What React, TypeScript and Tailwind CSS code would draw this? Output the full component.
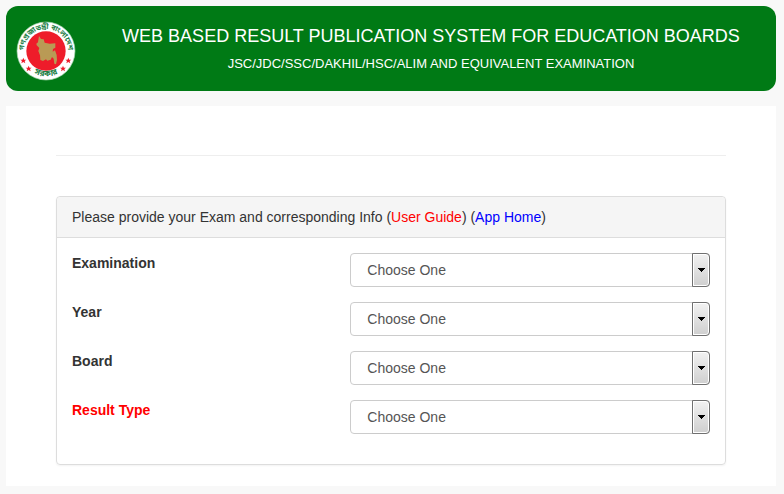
import React from 'react';

interface Field {
  id: string;
  label: string;
  highlight?: boolean;
  options: string[];
}

const fields: Field[] = [
  { id: 'exam', label: 'Examination', options: ['SSC/Dakhil', 'JSC/JDC', 'HSC/Alim'] },
  { id: 'year', label: 'Year', options: ['2016', '2015', '2014'] },
  { id: 'board', label: 'Board', options: ['Dhaka', 'Chittagong', 'Rajshahi'] },
  { id: 'result_type', label: 'Result Type', highlight: true, options: ['Individual Result', 'Institution Result'] },
];

const stars = [
  { x: 70, y: 182 },
  { x: 86, y: 206 },
  { x: 189, y: 206 },
  { x: 205, y: 182 },
];

const Emblem: React.FC = () => (
  <svg viewBox="48 63 180 180" className="size-[60px] shrink-0" role="img" aria-label="Government seal">
    <circle cx="138" cy="153" r="87" fill="#fff" stroke="#a5d3ae" strokeWidth="2" />
    <circle cx="138" cy="153" r="59" fill="#ee1c2a" />
    <path
      d="M117 108l6 9 8 1 3 10 15 3 17-1v13l-7 4-1 8 7-4 5 14 1 15-3 13-5-2-2-15-5-5-4 8-10 3-4-4-9 5-8-3-1-14-5-13 3-9-8-8-1-5 5-4 1-7z"
      fill="#b99a55"
    />
    {stars.map((star) => (
      <path
        key={star.x}
        transform={`translate(${star.x} ${star.y})`}
        d="M0-9l2.500 6h6.500l-5 4 2 7-6-4-6 4 2-7-5-4h6.500z"
        fill="#ee1c2a"
      />
    ))}
    <path id="arc-top" d="M72 153a66 66 0 0 1 132 0" fill="none" />
    <path id="arc-bottom" d="M80 203a78 78 0 0 0 116 0" fill="none" />
    <g fill="#1d8048" textAnchor="middle" fontFamily="'Noto Sans Bengali', 'Noto Sans', sans-serif">
      <text fontSize="22" fontWeight="bold">
        <textPath href="#arc-top" startOffset="50%">গণপ্রজাতন্ত্রী বাংলাদেশ</textPath>
      </text>
      <text fontSize="25" fontWeight="bold">
        <textPath href="#arc-bottom" startOffset="50%">সরকার</textPath>
      </text>
    </g>
  </svg>
);

const SelectField: React.FC<{ field: Field }> = ({ field }) => (
  <div className="-mx-[15px] mb-[15px] grid grid-cols-12">
    <label
      htmlFor={field.id}
      className={field.highlight ? 'col-span-5 px-[15px] font-bold text-[#ff0000]' : 'col-span-5 px-[15px] font-bold'}
    >
      {field.label}
    </label>
    <div className="col-span-7 px-[15px]">
      <div className="relative">
        <select
          id={field.id}
          className="block h-[34px] w-full appearance-none rounded border border-[#ccc] bg-white pr-6 pl-4 text-[#555]"
        >
          <option>Choose One</option>
          {field.options.map((option) => (
            <option key={option}>{option}</option>
          ))}
        </select>
        <span className="pointer-events-none absolute inset-y-0 right-0 flex w-[18px] items-center justify-center rounded-r-sm border border-[#707070] bg-linear-to-b from-[#f2f2f2] to-[#cfcfcf] inset-ring inset-ring-white">
          <svg viewBox="0 0 8 4" className="h-1 w-2" shapeRendering="crispEdges" aria-hidden="true">
            <path d="M0 0h8L4 4z" fill="#000" />
          </svg>
        </span>
      </div>
    </div>
  </div>
);

export default function App() {
  return (
    <div className="min-h-screen bg-[#f8f8f8] pt-1.5 pr-2 pb-2 pl-1.5 font-['Liberation_Sans',Arial,sans-serif] text-sm leading-5 text-[#333]">
      <header className="flex items-center gap-2.5 rounded-xl bg-[#007a15] pt-3.5 pb-[9px] pl-2.5 text-white">
        <Emblem />
        <div className="flex-1 pb-1.5 text-center">
          <h1 className="text-lg leading-8">WEB BASED RESULT PUBLICATION SYSTEM FOR EDUCATION BOARDS</h1>
          <p className="text-[13px] leading-6">JSC/JDC/SSC/DAKHIL/HSC/ALIM AND EQUIVALENT EXAMINATION</p>
        </div>
      </header>

      <main className="mt-[15px] bg-white px-[50px] pt-[49px] pb-[21px]">
        <hr className="mb-10 border-[#eee]" />
        <section className="rounded border border-[#ddd] shadow-xs">
          <div className="rounded-t border-b border-[#ddd] bg-[#f5f5f5] px-[15px] py-2.5">
            Please provide your Exam and corresponding Info (
            <a href="#guide" className="text-[#ff0000]">User Guide</a>) (
            <a href="#home" className="text-[#0000ff]">App Home</a>)
          </div>
          <form className="p-[15px]">
            {fields.map((field) => (
              <SelectField key={field.id} field={field} />
            ))}
          </form>
        </section>
      </main>
    </div>
  );
}
